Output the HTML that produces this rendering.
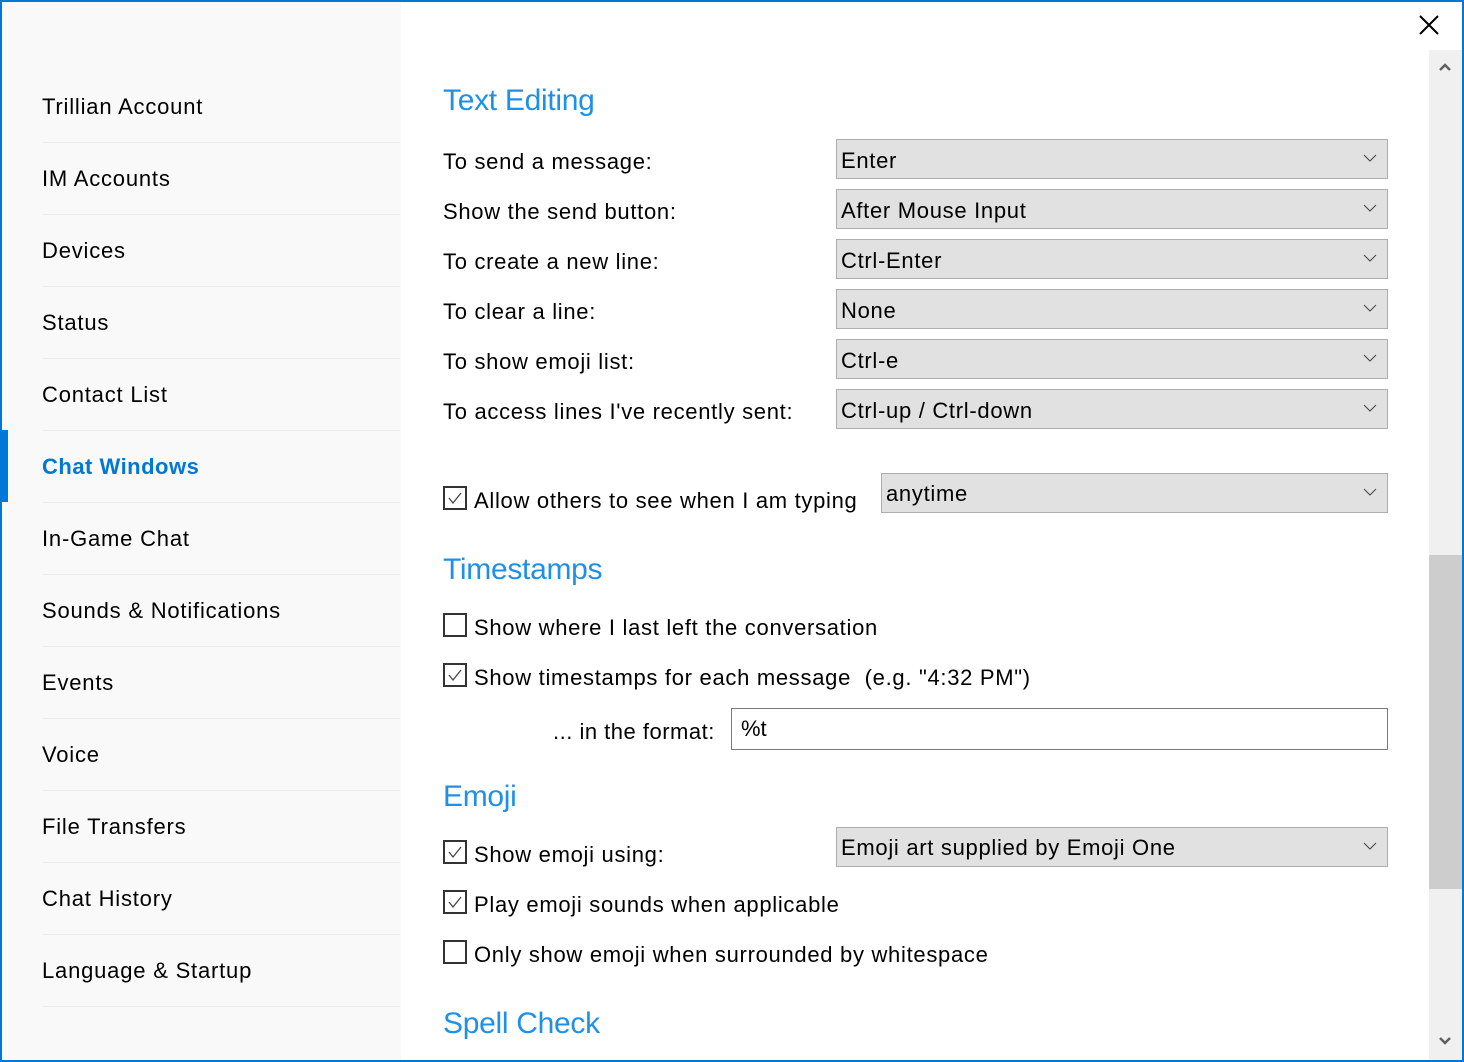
<!DOCTYPE html>
<html><head><style>
*{margin:0;padding:0;box-sizing:border-box}
body{width:1464px;height:1062px;position:relative;overflow:hidden;background:#fff;font-family:"Liberation Sans",sans-serif;color:#000}
.frame{position:absolute;inset:0;border:2px solid #0078d7;pointer-events:none;z-index:10}
.side{position:absolute;left:2px;top:2px;width:399px;height:1058px;background:#f9f9f9}
.it{position:absolute;left:42px;font-size:22px;line-height:24px;letter-spacing:0.8px;white-space:nowrap}
.sep{position:absolute;left:42px;width:358px;height:1px;background:#ececec}
.sel{position:absolute;left:2px;top:430px;width:6px;height:72px;background:#0078d7}
.h{position:absolute;left:443px;font-size:30px;color:#1e90e8;font-weight:300;letter-spacing:-0.3px}
.l{position:absolute;font-size:22px;line-height:24px;white-space:nowrap;letter-spacing:0.7px}
.dd{position:absolute;left:836px;width:552px;height:40px;background:#e1e1e1;border:1px solid #adadad;font-size:22px;line-height:42px;padding-left:4px;letter-spacing:0.7px}
.dd svg{position:absolute;right:10px;top:14px}
.cb{position:absolute;left:443px;width:24px;height:24px;border:2px solid #333;background:#fff}
.cb svg{position:absolute;left:2px;top:2px}
.sb{position:absolute;left:1429px;top:50px;width:33px;height:1010px;background:#f0f0f0}
.th{position:absolute;left:1429px;top:555px;width:33px;height:334px;background:#cdcdcd}
</style></head><body>
<div class="side"></div>
<div class="sel"></div>
<div class="it" style="top:95px">Trillian Account</div>
<div class="sep" style="top:142px"></div>
<div class="it" style="top:167px">IM Accounts</div>
<div class="sep" style="top:214px"></div>
<div class="it" style="top:239px">Devices</div>
<div class="sep" style="top:286px"></div>
<div class="it" style="top:311px">Status</div>
<div class="sep" style="top:358px"></div>
<div class="it" style="top:383px">Contact List</div>
<div class="sep" style="top:430px"></div>
<div class="it" style="top:455px;color:#0078d7;font-weight:bold;letter-spacing:0.5px">Chat Windows</div>
<div class="sep" style="top:502px"></div>
<div class="it" style="top:527px">In-Game Chat</div>
<div class="sep" style="top:574px"></div>
<div class="it" style="top:599px">Sounds &amp; Notifications</div>
<div class="sep" style="top:646px"></div>
<div class="it" style="top:671px">Events</div>
<div class="sep" style="top:718px"></div>
<div class="it" style="top:743px">Voice</div>
<div class="sep" style="top:790px"></div>
<div class="it" style="top:815px">File Transfers</div>
<div class="sep" style="top:862px"></div>
<div class="it" style="top:887px">Chat History</div>
<div class="sep" style="top:934px"></div>
<div class="it" style="top:959px">Language &amp; Startup</div>
<div class="sep" style="top:1006px"></div>

<svg style="position:absolute;left:1418px;top:14px" width="22" height="22"><path d="M2 2L20 20M20 2L2 20" stroke="#000" stroke-width="2"/></svg>
<div class="sb"></div><div class="th"></div>
<svg style="position:absolute;left:1438px;top:62px" width="14" height="10"><path d="M2 8L7 3L12 8" stroke="#606060" stroke-width="2.5" fill="none"/></svg>
<svg style="position:absolute;left:1438px;top:1036px" width="14" height="10"><path d="M2 2L7 7L12 2" stroke="#606060" stroke-width="2.5" fill="none"/></svg>

<div class="h" style="top:84px">Text Editing</div>
<div class="l" style="left:443px;top:150px">To send a message:</div>
<div class="l" style="left:443px;top:200px">Show the send button:</div>
<div class="l" style="left:443px;top:250px">To create a new line:</div>
<div class="l" style="left:443px;top:300px">To clear a line:</div>
<div class="l" style="left:443px;top:350px">To show emoji list:</div>
<div class="l" style="left:443px;top:400px">To access lines I've recently sent:</div>
<div class="dd" style="top:139px">Enter<svg width="14" height="9"><path d="M1 1L7 7L13 1" stroke="#444" fill="none"/></svg></div>
<div class="dd" style="top:189px">After Mouse Input<svg width="14" height="9"><path d="M1 1L7 7L13 1" stroke="#444" fill="none"/></svg></div>
<div class="dd" style="top:239px">Ctrl-Enter<svg width="14" height="9"><path d="M1 1L7 7L13 1" stroke="#444" fill="none"/></svg></div>
<div class="dd" style="top:289px">None<svg width="14" height="9"><path d="M1 1L7 7L13 1" stroke="#444" fill="none"/></svg></div>
<div class="dd" style="top:339px">Ctrl-e<svg width="14" height="9"><path d="M1 1L7 7L13 1" stroke="#444" fill="none"/></svg></div>
<div class="dd" style="top:389px">Ctrl-up / Ctrl-down<svg width="14" height="9"><path d="M1 1L7 7L13 1" stroke="#444" fill="none"/></svg></div>

<div class="cb" style="top:486px"><svg width="16" height="16"><path d="M2 8L6 13L14 3" stroke="#444" stroke-width="1.3" fill="none"/></svg></div>
<div class="l" style="left:474px;top:489px">Allow others to see when I am typing</div>
<div class="dd" style="top:473px;left:881px;width:507px;line-height:40px">anytime<svg width="14" height="9"><path d="M1 1L7 7L13 1" stroke="#444" fill="none"/></svg></div>

<div class="h" style="top:553px">Timestamps</div>
<div class="cb" style="top:613px"></div>
<div class="l" style="left:474px;top:616px">Show where I last left the conversation</div>
<div class="cb" style="top:663px"><svg width="16" height="16"><path d="M2 8L6 13L14 3" stroke="#444" stroke-width="1.3" fill="none"/></svg></div>
<div class="l" style="left:474px;top:666px">Show timestamps for each message &nbsp;(e.g. "4:32 PM")</div>
<div class="l" style="left:553px;top:720px;letter-spacing:0.5px">... in the format:</div>
<div style="position:absolute;left:731px;top:708px;width:657px;height:42px;border:1px solid #7a7a7a;font-size:22px;line-height:40px;padding-left:9px">%t</div>

<div class="h" style="top:780px">Emoji</div>
<div class="cb" style="top:840px"><svg width="16" height="16"><path d="M2 8L6 13L14 3" stroke="#444" stroke-width="1.3" fill="none"/></svg></div>
<div class="l" style="left:474px;top:843px">Show emoji using:</div>
<div class="dd" style="top:827px;line-height:40px">Emoji art supplied by Emoji One<svg width="14" height="9"><path d="M1 1L7 7L13 1" stroke="#444" fill="none"/></svg></div>
<div class="cb" style="top:890px"><svg width="16" height="16"><path d="M2 8L6 13L14 3" stroke="#444" stroke-width="1.3" fill="none"/></svg></div>
<div class="l" style="left:474px;top:893px">Play emoji sounds when applicable</div>
<div class="cb" style="top:940px"></div>
<div class="l" style="left:474px;top:943px">Only show emoji when surrounded by whitespace</div>

<div class="h" style="top:1007px">Spell Check</div>
<div class="frame"></div>
</body></html>
